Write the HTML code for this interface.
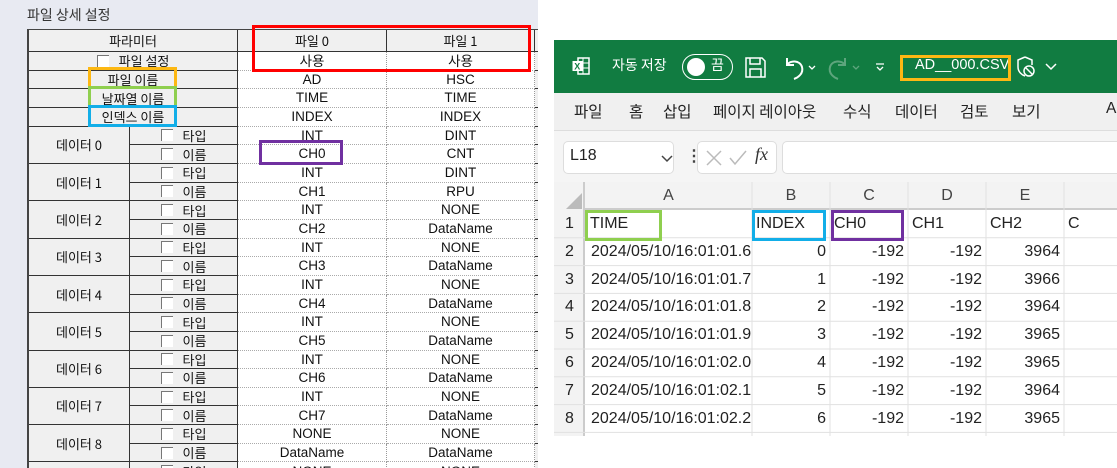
<!DOCTYPE html>
<html><head><meta charset="utf-8"><style>
*{margin:0;padding:0;box-sizing:border-box}
html,body{width:1117px;height:468px;overflow:hidden}
body{background:#fff;position:relative;font-family:"Liberation Sans","Noto Sans CJK KR",sans-serif}
.abs{position:absolute}
#lp{left:0;top:0;width:538px;height:468px;background:#e8eaf2}
#title{left:27px;top:5px;font-size:14px;color:#333;font-family:"Noto Sans CJK KR",sans-serif}
#tbl{left:27px;top:29px;width:511px;height:439px;overflow:hidden;display:grid;grid-template-columns:101px 108px 149px 148px 20px;grid-template-rows:22px repeat(24,18.67px);border-left:2px solid #444;border-top:1px solid #444;font-size:13px;font-family:"Noto Sans CJK KR","Liberation Sans",sans-serif}
.p{background:#f0f0f0;border-right:1px solid #333;border-bottom:1px solid #333;display:flex;align-items:center;justify-content:center;line-height:1;color:#111}
.v{background:#fff;border-right:1px dotted #999;border-bottom:1px dotted #aaa;display:flex;align-items:center;justify-content:center;line-height:1;color:#111;font-family:"Liberation Sans",sans-serif;font-size:13.5px}
.h{background:#f0f0f0;border-right:1px solid #333;border-bottom:1px solid #333}
.cb{display:inline-block;width:12px;height:12px;border-left:1.5px solid #777;border-top:1.5px solid #777;background:#fff;margin-right:10px}
.box{position:absolute;border:3px solid}
.tb{position:absolute;color:#fff;font-size:14px;font-family:"Noto Sans CJK KR",sans-serif}
.rib{position:absolute;top:100px;font-size:15.5px;color:#222;font-family:"Noto Sans CJK KR",sans-serif}
.gc{position:absolute;font-size:16px;color:#222;line-height:27.8px;white-space:nowrap;overflow:hidden}
</style></head><body>
<div id="lp" class="abs"></div>
<div id="title" class="abs">파일 상세 설정</div>
<div id="tbl" class="abs">
<div class="p" style="grid-column:1/3">파라미터</div><div class="p">파일 0</div><div class="p">파일 1</div><div class="h"></div>
<div class="p" style="grid-column:1/3"><span class="cb"></span>파일 설정</div><div class="v" style="font-family:'Noto Sans CJK KR'">사용</div><div class="v" style="font-family:'Noto Sans CJK KR'">사용</div><div class="h"></div>
<div class="p" style="grid-column:1/3">파일 이름</div><div class="v">AD</div><div class="v">HSC</div><div class="h"></div>
<div class="p" style="grid-column:1/3">날짜열 이름</div><div class="v">TIME</div><div class="v">TIME</div><div class="h"></div>
<div class="p" style="grid-column:1/3">인덱스 이름</div><div class="v">INDEX</div><div class="v">INDEX</div><div class="h"></div>
<div class="p" style="grid-row:span 2">데이터 0</div><div class="p"><span class="cb"></span>타입</div><div class="v">INT</div><div class="v">DINT</div><div class="h"></div>
<div class="p"><span class="cb"></span>이름</div><div class="v">CH0</div><div class="v">CNT</div><div class="h"></div>
<div class="p" style="grid-row:span 2">데이터 1</div><div class="p"><span class="cb"></span>타입</div><div class="v">INT</div><div class="v">DINT</div><div class="h"></div>
<div class="p"><span class="cb"></span>이름</div><div class="v">CH1</div><div class="v">RPU</div><div class="h"></div>
<div class="p" style="grid-row:span 2">데이터 2</div><div class="p"><span class="cb"></span>타입</div><div class="v">INT</div><div class="v">NONE</div><div class="h"></div>
<div class="p"><span class="cb"></span>이름</div><div class="v">CH2</div><div class="v">DataName</div><div class="h"></div>
<div class="p" style="grid-row:span 2">데이터 3</div><div class="p"><span class="cb"></span>타입</div><div class="v">INT</div><div class="v">NONE</div><div class="h"></div>
<div class="p"><span class="cb"></span>이름</div><div class="v">CH3</div><div class="v">DataName</div><div class="h"></div>
<div class="p" style="grid-row:span 2">데이터 4</div><div class="p"><span class="cb"></span>타입</div><div class="v">INT</div><div class="v">NONE</div><div class="h"></div>
<div class="p"><span class="cb"></span>이름</div><div class="v">CH4</div><div class="v">DataName</div><div class="h"></div>
<div class="p" style="grid-row:span 2">데이터 5</div><div class="p"><span class="cb"></span>타입</div><div class="v">INT</div><div class="v">NONE</div><div class="h"></div>
<div class="p"><span class="cb"></span>이름</div><div class="v">CH5</div><div class="v">DataName</div><div class="h"></div>
<div class="p" style="grid-row:span 2">데이터 6</div><div class="p"><span class="cb"></span>타입</div><div class="v">INT</div><div class="v">NONE</div><div class="h"></div>
<div class="p"><span class="cb"></span>이름</div><div class="v">CH6</div><div class="v">DataName</div><div class="h"></div>
<div class="p" style="grid-row:span 2">데이터 7</div><div class="p"><span class="cb"></span>타입</div><div class="v">INT</div><div class="v">NONE</div><div class="h"></div>
<div class="p"><span class="cb"></span>이름</div><div class="v">CH7</div><div class="v">DataName</div><div class="h"></div>
<div class="p" style="grid-row:span 2">데이터 8</div><div class="p"><span class="cb"></span>타입</div><div class="v">NONE</div><div class="v">NONE</div><div class="h"></div>
<div class="p"><span class="cb"></span>이름</div><div class="v">DataName</div><div class="v">DataName</div><div class="h"></div>
<div class="p" style="grid-row:span 2">데이터 9</div><div class="p"><span class="cb"></span>타입</div><div class="v">NONE</div><div class="v">NONE</div><div class="h"></div>
<div class="p"><span class="cb"></span>이름</div><div class="v">DataName</div><div class="v">DataName</div><div class="h"></div>
</div>
<div class="box" style="left:252px;top:25px;width:279px;height:47px;border-color:#f00"></div>
<div class="box" style="left:88px;top:67px;width:89px;height:22px;border-color:#fdb813"></div>
<div class="box" style="left:88px;top:86px;width:89px;height:22px;border-color:#8fcf4f"></div>
<div class="box" style="left:88px;top:105px;width:89px;height:22px;border-color:#12aee8"></div>
<div class="box" style="left:259px;top:140px;width:84px;height:25px;border-color:#7030a0"></div>

<!-- Excel -->
<div class="abs" style="left:554px;top:40px;width:563px;height:53px;background:#117c41"></div>
<svg class="abs" style="left:572px;top:57px" width="18" height="18" viewBox="0 0 18 18"><rect x="6" y="1" width="11" height="16" fill="none" stroke="#fff" stroke-width="1.5"/><line x1="11" y1="1" x2="11" y2="17" stroke="#fff"/><line x1="6" y1="6" x2="17" y2="6" stroke="#fff"/><line x1="6" y1="11" x2="17" y2="11" stroke="#fff"/><rect x="0.5" y="4" width="10" height="10" fill="#fff"/><text x="2.3" y="12.5" font-size="9" font-weight="bold" fill="#117c41" font-family="Liberation Sans">X</text></svg>
<div class="tb" style="left:612px;top:55px">자동 저장</div>
<div class="abs" style="left:682px;top:54px;width:51px;height:26px;border:1.5px solid #fff;border-radius:13px"></div>
<div class="abs" style="left:687px;top:58px;width:18px;height:18px;border-radius:50%;background:#fff"></div>
<div class="tb" style="left:711px;top:55px">끔</div>
<svg class="abs" style="left:745px;top:57px" width="21" height="21" viewBox="0 0 21 21" fill="none" stroke="#fff" stroke-width="1.5"><path d="M1 1h16l3 3v16H1z"/><path d="M5 1v6h10V1M5 20v-8h11v8"/></svg>
<svg class="abs" style="left:784px;top:56px" width="22" height="24" viewBox="0 0 22 24" fill="none" stroke="#fff" stroke-width="2"><path d="M3 2v7h7"/><path d="M3 9c3-5 13-5 15 2s-5 11-8 12"/></svg>
<svg class="abs" style="left:808px;top:65px" width="8" height="6" viewBox="0 0 8 6" fill="none" stroke="#fff" stroke-width="1.3"><path d="M1 1l3 3 3-3"/></svg>
<svg class="abs" style="left:826px;top:56px" width="22" height="24" viewBox="0 0 22 24" fill="none" stroke="#5ea57d" stroke-width="2"><path d="M19 2v7h-7"/><path d="M19 9c-3-5-13-5-15 2s5 11 8 12"/></svg>
<svg class="abs" style="left:852px;top:65px" width="8" height="6" viewBox="0 0 8 6" fill="none" stroke="#5ea57d" stroke-width="1.3"><path d="M1 1l3 3 3-3"/></svg>
<svg class="abs" style="left:875px;top:62px" width="10" height="10" viewBox="0 0 10 10" fill="none" stroke="#fff" stroke-width="1.3"><path d="M1 2h8M2 5l3 3 3-3"/></svg>
<div class="tb" style="left:915px;top:57px;font-family:'Liberation Sans';font-size:14.5px">AD__000.CSV</div>
<div class="box" style="left:900px;top:55px;width:111px;height:26px;border-color:#fdb813"></div>
<svg class="abs" style="left:1016px;top:56px" width="20" height="22" viewBox="0 0 20 22" fill="none" stroke="#fff" stroke-width="1.5"><path d="M9 1L2 4v7c0 5 4 8 7 9"/><path d="M9 1l7 3v5"/><circle cx="13" cy="15" r="5"/><line x1="10" y1="12" x2="16" y2="18"/></svg>
<svg class="abs" style="left:1045px;top:63px" width="12" height="8" viewBox="0 0 12 8" fill="none" stroke="#fff" stroke-width="1.5"><path d="M1 1l5 5 5-5"/></svg>

<div class="abs" style="left:554px;top:93px;width:563px;height:38px;background:#f0f0f0;border-bottom:1px solid #ddd"></div>
<div class="rib" style="left:574px">파일</div><div class="rib" style="left:629px">홈</div><div class="rib" style="left:663px">삽입</div><div class="rib" style="left:713px">페이지 레이아웃</div><div class="rib" style="left:843px">수식</div><div class="rib" style="left:895px">데이터</div><div class="rib" style="left:960px">검토</div><div class="rib" style="left:1012px">보기</div><div class="rib" style="left:1106px;font-family:'Liberation Sans'">A</div>

<div class="abs" style="left:554px;top:131px;width:563px;height:52px;background:#f5f5f5"></div>
<div class="abs" style="left:563px;top:141px;width:111px;height:33px;background:#fff;border:1px solid #ddd;border-radius:5px"></div>
<div class="abs" style="left:570px;top:147px;font-size:16px;color:#222">L18</div>
<svg class="abs" style="left:661px;top:155px" width="12" height="8" viewBox="0 0 12 8" fill="none" stroke="#444" stroke-width="1.5"><path d="M1 1l5 5 5-5"/></svg>
<div class="abs" style="left:686px;top:146px;font-size:16px;color:#444;font-weight:bold">⋮</div>
<div class="abs" style="left:697px;top:141px;width:80px;height:33px;background:#fff;border:1px solid #ddd;border-radius:5px"></div>
<svg class="abs" style="left:705px;top:149px" width="60" height="18" viewBox="0 0 60 18" fill="none" stroke="#bbb" stroke-width="1.5"><path d="M2 2l14 14M16 2L2 16"/><path d="M25 9l5 6 11-13"/></svg>
<div class="abs" style="left:755px;top:144px;font-size:18px;font-style:italic;font-family:'Liberation Serif';color:#333">fx</div>
<div class="abs" style="left:782px;top:141px;width:340px;height:33px;background:#fff;border:1px solid #ddd;border-radius:5px"></div>

<div class="abs" style="left:554px;top:182px;width:563px;height:254px;background:#fff"></div>
<div class="abs" style="left:554px;top:182px;width:31px;height:254px;background:#f3f3f3;border-right:2px solid #ccc"></div>
<div class="abs" style="left:585px;top:182px;width:532px;height:28px;background:#f3f3f3;border-bottom:2px solid #ccc"></div>
<svg class="abs" style="left:566px;top:193px" width="16" height="16"><path d="M16 0V16H0z" fill="#bbb"/></svg>
<svg class="abs" style="left:554px;top:182px" width="563" height="254">
<g stroke="#e1e1e1" stroke-width="1">
<line x1="198" y1="0" x2="198" y2="254"/><line x1="276" y1="0" x2="276" y2="254"/><line x1="354" y1="0" x2="354" y2="254"/><line x1="432" y1="0" x2="432" y2="254"/><line x1="510" y1="0" x2="510" y2="254"/>
<line x1="0" y1="55.8" x2="563" y2="55.8"/><line x1="0" y1="83.6" x2="563" y2="83.6"/><line x1="0" y1="111.4" x2="563" y2="111.4"/><line x1="0" y1="139.2" x2="563" y2="139.2"/><line x1="0" y1="167" x2="563" y2="167"/><line x1="0" y1="194.8" x2="563" y2="194.8"/><line x1="0" y1="222.6" x2="563" y2="222.6"/><line x1="0" y1="250.4" x2="563" y2="250.4"/>
</g></svg>
<div class="gc" style="left:585px;top:182px;width:167px;text-align:center;color:#444">A</div>
<div class="gc" style="left:752px;top:182px;width:78px;text-align:center;color:#444">B</div>
<div class="gc" style="left:830px;top:182px;width:78px;text-align:center;color:#444">C</div>
<div class="gc" style="left:908px;top:182px;width:78px;text-align:center;color:#444">D</div>
<div class="gc" style="left:986px;top:182px;width:78px;text-align:center;color:#444">E</div>

<div class="gc" style="left:554px;top:210px;width:31px;text-align:center">1</div>
<div class="gc" style="left:590px;top:210px">TIME</div><div class="gc" style="left:756px;top:210px">INDEX</div><div class="gc" style="left:834px;top:210px">CH0</div><div class="gc" style="left:912px;top:210px">CH1</div><div class="gc" style="left:990px;top:210px">CH2</div><div class="gc" style="left:1068px;top:210px">C</div>

<div class="gc" style="left:554px;top:237.8px;width:31px;text-align:center">2</div><div class="gc" style="left:591px;top:237.8px;width:160px">2024/05/10/16:01:01.623</div><div class="gc" style="left:752px;top:237.8px;width:74px;text-align:right">0</div><div class="gc" style="left:830px;top:237.8px;width:74px;text-align:right">-192</div><div class="gc" style="left:908px;top:237.8px;width:74px;text-align:right">-192</div><div class="gc" style="left:986px;top:237.8px;width:74px;text-align:right">3964</div>
<div class="gc" style="left:554px;top:265.6px;width:31px;text-align:center">3</div><div class="gc" style="left:591px;top:265.6px;width:160px">2024/05/10/16:01:01.723</div><div class="gc" style="left:752px;top:265.6px;width:74px;text-align:right">1</div><div class="gc" style="left:830px;top:265.6px;width:74px;text-align:right">-192</div><div class="gc" style="left:908px;top:265.6px;width:74px;text-align:right">-192</div><div class="gc" style="left:986px;top:265.6px;width:74px;text-align:right">3966</div>
<div class="gc" style="left:554px;top:293.4px;width:31px;text-align:center">4</div><div class="gc" style="left:591px;top:293.4px;width:160px">2024/05/10/16:01:01.823</div><div class="gc" style="left:752px;top:293.4px;width:74px;text-align:right">2</div><div class="gc" style="left:830px;top:293.4px;width:74px;text-align:right">-192</div><div class="gc" style="left:908px;top:293.4px;width:74px;text-align:right">-192</div><div class="gc" style="left:986px;top:293.4px;width:74px;text-align:right">3964</div>
<div class="gc" style="left:554px;top:321.2px;width:31px;text-align:center">5</div><div class="gc" style="left:591px;top:321.2px;width:160px">2024/05/10/16:01:01.923</div><div class="gc" style="left:752px;top:321.2px;width:74px;text-align:right">3</div><div class="gc" style="left:830px;top:321.2px;width:74px;text-align:right">-192</div><div class="gc" style="left:908px;top:321.2px;width:74px;text-align:right">-192</div><div class="gc" style="left:986px;top:321.2px;width:74px;text-align:right">3965</div>
<div class="gc" style="left:554px;top:349px;width:31px;text-align:center">6</div><div class="gc" style="left:591px;top:349px;width:160px">2024/05/10/16:01:02.023</div><div class="gc" style="left:752px;top:349px;width:74px;text-align:right">4</div><div class="gc" style="left:830px;top:349px;width:74px;text-align:right">-192</div><div class="gc" style="left:908px;top:349px;width:74px;text-align:right">-192</div><div class="gc" style="left:986px;top:349px;width:74px;text-align:right">3965</div>
<div class="gc" style="left:554px;top:376.8px;width:31px;text-align:center">7</div><div class="gc" style="left:591px;top:376.8px;width:160px">2024/05/10/16:01:02.123</div><div class="gc" style="left:752px;top:376.8px;width:74px;text-align:right">5</div><div class="gc" style="left:830px;top:376.8px;width:74px;text-align:right">-192</div><div class="gc" style="left:908px;top:376.8px;width:74px;text-align:right">-192</div><div class="gc" style="left:986px;top:376.8px;width:74px;text-align:right">3964</div>
<div class="gc" style="left:554px;top:404.6px;width:31px;text-align:center">8</div><div class="gc" style="left:591px;top:404.6px;width:160px">2024/05/10/16:01:02.223</div><div class="gc" style="left:752px;top:404.6px;width:74px;text-align:right">6</div><div class="gc" style="left:830px;top:404.6px;width:74px;text-align:right">-192</div><div class="gc" style="left:908px;top:404.6px;width:74px;text-align:right">-192</div><div class="gc" style="left:986px;top:404.6px;width:74px;text-align:right">3965</div>

<div class="box" style="left:585px;top:210px;width:77px;height:31px;border-color:#8fcf4f"></div>
<div class="box" style="left:752px;top:210px;width:74px;height:31px;border-color:#12aee8"></div>
<div class="box" style="left:831px;top:210px;width:73px;height:31px;border-color:#7030a0"></div>
</body></html>
